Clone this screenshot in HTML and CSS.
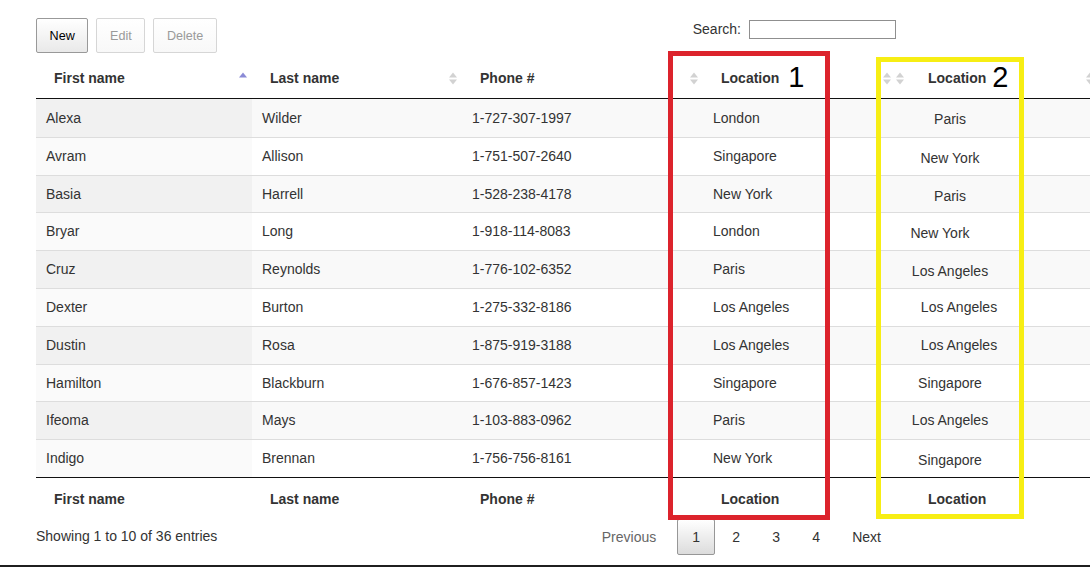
FILE: index.html
```html
<!DOCTYPE html>
<html>
<head>
<meta charset="utf-8">
<title>DataTables</title>
<link rel="stylesheet" href="styles.css">
</head>
<body>
<div class="page">
  <div class="wrapper">
    <div class="top">
      <div class="buttons">
        <button class="btn">New</button>
        <button class="btn disabled">Edit</button>
        <button class="btn disabled">Delete</button>
      </div>
      <label class="filter">Search: <input type="search" class="search"></label>
    </div>

    <table class="grid">
      <colgroup>
        <col class="w-first"><col class="w-last"><col class="w-phone"><col class="w-loc1"><col class="w-loc2">
      </colgroup>
      <thead>
        <tr>
          <th><div class="th-in"><span>First name</span><svg class="si" width="8" height="13" viewBox="0 0 8 13"><path d="M0 5.5L4 0.5L8 5.5Z" fill="#8a8ad6"/></svg></div></th>
          <th><div class="th-in"><span>Last name</span><svg class="si" width="8" height="13" viewBox="0 0 8 13"><path d="M0 5.5L4 0.5L8 5.5Z M0 7.5L8 7.5L4 12.5Z" fill="#d2d2d2"/></svg></div></th>
          <th><div class="th-in"><span>Phone #</span><svg class="si" width="8" height="13" viewBox="0 0 8 13"><path d="M0 5.5L4 0.5L8 5.5Z M0 7.5L8 7.5L4 12.5Z" fill="#d2d2d2"/></svg></div></th>
          <th><div class="th-in"><span>Location<span class="num n1">1</span></span><svg class="si" width="8" height="13" viewBox="0 0 8 13"><path d="M0 5.5L4 0.5L8 5.5Z M0 7.5L8 7.5L4 12.5Z" fill="#d2d2d2"/></svg></div></th>
          <th class="loc2"><div class="th-in"><svg class="si" width="8" height="13" viewBox="0 0 8 13"><path d="M0 5.5L4 0.5L8 5.5Z M0 7.5L8 7.5L4 12.5Z" fill="#d2d2d2"/></svg><span class="loc2-label">Location<span class="num n2">2</span></span><svg class="si" width="8" height="13" viewBox="0 0 8 13"><path d="M0 5.5L4 0.5L8 5.5Z M0 7.5L8 7.5L4 12.5Z" fill="#d2d2d2"/></svg></div></th>
        </tr>
      </thead>
      <tbody>
        <tr><td class="sorted">Alexa</td><td>Wilder</td><td>1-727-307-1997</td><td>London</td><td class="c2 dn">Paris</td></tr>
        <tr><td class="sorted">Avram</td><td>Allison</td><td>1-751-507-2640</td><td>Singapore</td><td class="c2 dn">New York</td></tr>
        <tr><td class="sorted">Basia</td><td>Harrell</td><td>1-528-238-4178</td><td>New York</td><td class="c2 dn">Paris</td></tr>
        <tr><td class="sorted">Bryar</td><td>Long</td><td>1-918-114-8083</td><td>London</td><td class="c2 l dn">New York</td></tr>
        <tr><td class="sorted">Cruz</td><td>Reynolds</td><td>1-776-102-6352</td><td>Paris</td><td class="c2 dn">Los Angeles</td></tr>
        <tr><td class="sorted">Dexter</td><td>Burton</td><td>1-275-332-8186</td><td>Los Angeles</td><td class="c2 r">Los Angeles</td></tr>
        <tr><td class="sorted">Dustin</td><td>Rosa</td><td>1-875-919-3188</td><td>Los Angeles</td><td class="c2 r">Los Angeles</td></tr>
        <tr><td class="sorted">Hamilton</td><td>Blackburn</td><td>1-676-857-1423</td><td>Singapore</td><td class="c2">Singapore</td></tr>
        <tr><td class="sorted">Ifeoma</td><td>Mays</td><td>1-103-883-0962</td><td>Paris</td><td class="c2">Los Angeles</td></tr>
        <tr><td class="sorted">Indigo</td><td>Brennan</td><td>1-756-756-8161</td><td>New York</td><td class="c2 dn">Singapore</td></tr>
      </tbody>
      <tfoot>
        <tr><th>First name</th><th>Last name</th><th>Phone #</th><th>Location</th><th class="loc2">Location</th></tr>
      </tfoot>
    </table>

    <div class="bottom">
      <div class="info">Showing 1 to 10 of 36 entries</div>
      <div class="paginate">
        <a class="pbtn disabled">Previous</a>
        <a class="pbtn current">1</a>
        <a class="pbtn">2</a>
        <a class="pbtn">3</a>
        <a class="pbtn">4</a>
        <a class="pbtn">Next</a>
      </div>
    </div>
  </div>
  <div class="edge"></div>

  <div class="mark mark-red"></div>
  <div class="mark mark-yellow"></div>
</div>
</body>
</html>
```

FILE: styles.css
```css
html, body {
  margin: 0;
  padding: 0;
  background: #fff;
  overflow: hidden;
}

body {
  font-family: "Liberation Sans", Arial, sans-serif;
  font-size: 14px;
  color: #333;
}

.page {
  position: relative;
  width: 1090px;
  height: 567px;
  overflow: hidden;
}

.wrapper {
  width: 860px;
  margin-left: 36px;
  padding-top: 18px;
}

.top {
  display: flex;
  justify-content: space-between;
  align-items: flex-start;
  height: 35px;
}

.buttons {
  display: flex;
  gap: 8px;
}

.btn {
  box-sizing: border-box;
  height: 35px;
  padding: 1px 12.6px 0 12.6px;
  font-family: "Liberation Sans", Arial, sans-serif;
  font-size: 12.6px;
  line-height: 33px;
  color: #000;
  border: 1px solid #999;
  border-radius: 2px;
  background: linear-gradient(to bottom, #ffffff 0%, #e9e9e9 100%);
}

.btn.disabled {
  color: #9a9a9a;
  border-color: #d6d6d6;
  background: linear-gradient(to bottom, #ffffff 0%, #f8f8f8 100%);
}

.filter {
  display: flex;
  align-items: center;
  gap: 8px;
  height: 22px;
  line-height: 22px;
}

.search {
  box-sizing: border-box;
  width: 147px;
  height: 19px;
  margin: 0;
  padding: 0 3px;
  border: 1px solid #8f8f8f;
  border-radius: 0;
  background: #fff;
  font-family: "Liberation Sans", Arial, sans-serif;
  font-size: 13px;
}

.grid {
  width: 1064px;
  margin-top: 5px;
  table-layout: fixed;
  border-collapse: separate;
  border-spacing: 0;
}

.w-first { width: 216px; }
.w-last { width: 210px; }
.w-phone { width: 241px; }
.w-loc1 { width: 193px; }
.w-loc2 { width: 204px; }

.grid thead th {
  padding: 10px 5px 10px 18px;
  line-height: 20px;
  font-weight: bold;
  text-align: left;
  border-bottom: 1px solid #111;
  color: #333;
}

.th-in {
  display: flex;
  align-items: center;
  justify-content: space-between;
  height: 20px;
}

.si {
  flex: none;
  display: block;
}

.num {
  font-size: 29px;
  font-weight: normal;
  line-height: 0;
  color: #000;
  vertical-align: -4px;
}

.n1 { margin-left: 9px; }
.n2 { margin-left: 6px; }

.grid thead th.loc2 {
  padding-left: 0;
  padding-right: 6px;
}

.loc2-label {
  margin-left: 24px;
  margin-right: auto;
}

.grid tbody td {
  padding: 9px 10px;
  line-height: 18.8px;
  border-top: 1px solid #ddd;
  white-space: nowrap;
}

.grid tbody tr:first-child td {
  border-top: none;
  padding-top: 10px;
}

.grid tbody tr:nth-child(odd) {
  background: #f9f9f9;
}

.grid tbody tr:nth-child(odd) td.sorted {
  background: #f1f1f1;
}

.grid tbody tr:nth-child(even) td.sorted {
  background: #fafafa;
}

.grid td.c2 {
  text-align: center;
  padding-left: 10px;
  padding-right: 106px;
}

.grid td.c2.l {
  padding-left: 0;
  padding-right: 116px;
}

.grid td.c2.r {
  padding-left: 19px;
  padding-right: 97px;
}

.grid tbody td.c2.dn {
  padding-top: 11px;
  padding-bottom: 7px;
}

.grid tbody tr:first-child td.c2.dn {
  padding-top: 11px;
  padding-bottom: 8px;
}

.grid tfoot th {
  padding: 11px 18px 5px 18px;
  line-height: 20px;
  font-weight: bold;
  text-align: left;
  border-top: 1px solid #111;
  color: #333;
}

.grid tfoot th.loc2 {
  padding-left: 32px;
}

.bottom {
  display: flex;
  justify-content: space-between;
  align-items: flex-start;
}

.info {
  padding-top: 12px;
  line-height: 20px;
}

.paginate {
  display: flex;
  padding-top: 5px;
}

.pbtn {
  box-sizing: border-box;
  min-width: 38px;
  margin-left: 2px;
  padding: 7px 14px;
  line-height: 20px;
  text-align: center;
  color: #333;
  border: 1px solid transparent;
  border-radius: 2px;
  cursor: default;
}

.pbtn.disabled {
  color: #666;
  padding-left: 10px;
  padding-right: 18px;
}

.pbtn.current {
  border-color: #979797;
  background: linear-gradient(to bottom, #ffffff 0%, #dcdcdc 100%);
}

.edge {
  margin-top: 10px;
  height: 2px;
  background: #1f1f1f;
}

.mark {
  position: absolute;
  box-sizing: border-box;
  border-style: solid;
  border-width: 5px;
}

.mark-red {
  left: 668px;
  top: 51px;
  width: 162px;
  height: 469px;
  border-color: #dc232c;
}

.mark-yellow {
  left: 876px;
  top: 57px;
  width: 148px;
  height: 462px;
  border-color: #f7ee14;
}
```
